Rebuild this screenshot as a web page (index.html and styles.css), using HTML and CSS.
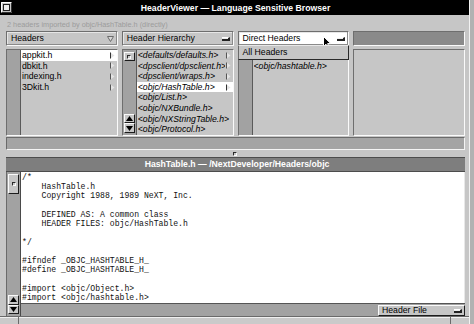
FILE: index.html
```html
<!DOCTYPE html>
<html>
<head>
<meta charset="utf-8">
<link rel="stylesheet" href="styles.css">
</head>
<body>
<div class="window">
  <div class="titlebar">
    <svg class="mini" width="11" height="11" viewBox="0 0 11 11"><rect x="0" y="0" width="11" height="11" fill="#c6c6c6"/><path d="M0.5 10.5V0.5H10.5" stroke="#fff" fill="none"/><path d="M0.5 10.5H10.5V0.5" stroke="#333" fill="none"/><rect x="2.5" y="2.5" width="6" height="6" fill="#eee" stroke="#222"/></svg>
    <span class="title">HeaderViewer — Language Sensitive Browser</span>
  </div>
  <div class="status">2 headers imported by objc/HashTable.h (directly)</div>
  <div class="browser">
    <div class="col">
      <div class="colhead"><span>Headers</span><svg class="pulldown" width="7" height="6" viewBox="0 0 7 6"><path d="M0.5 0.5H6.5L3.5 5.5Z" fill="#d8d8d8" stroke="#6a6a6a"/></svg></div>
      <div class="list">
        <div class="trough"></div>
        <ul class="rows">
          <li class="sel"><span>appkit.h</span><svg class="br" width="5" height="7" viewBox="0 0 5 7"><path d="M0.5 0.5V6.5L4.5 3.5Z" fill="#e4e4e4"/><path d="M0.5 0.5V6.5" stroke="#333"/></svg></li>
          <li><span>dbkit.h</span><svg class="br" width="5" height="7" viewBox="0 0 5 7"><path d="M0.5 0.5V6.5L4.5 3.5Z" fill="#e4e4e4"/><path d="M0.5 0.5V6.5" stroke="#555"/></svg></li>
          <li><span>indexing.h</span><svg class="br" width="5" height="7" viewBox="0 0 5 7"><path d="M0.5 0.5V6.5L4.5 3.5Z" fill="#e4e4e4"/><path d="M0.5 0.5V6.5" stroke="#555"/></svg></li>
          <li><span>3Dkit.h</span><svg class="br" width="5" height="7" viewBox="0 0 5 7"><path d="M0.5 0.5V6.5L4.5 3.5Z" fill="#e4e4e4"/><path d="M0.5 0.5V6.5" stroke="#555"/></svg></li>
        </ul>
      </div>
    </div>
    <div class="col">
      <div class="colhead"><span>Header Hierarchy</span><i class="popicon"></i></div>
      <div class="list">
        <div class="scroller">
          <div class="knob"><i class="dimple"></i></div>
          <div class="arrows">
            <div class="arrow"><svg width="7" height="5" viewBox="0 0 7 5"><path d="M3.5 0L7 5H0Z" fill="#000"/></svg></div>
            <div class="arrow"><svg width="7" height="5" viewBox="0 0 7 5"><path d="M0 0H7L3.5 5Z" fill="#000"/></svg></div>
          </div>
        </div>
        <ul class="rows ital">
          <li><span>&lt;defaults/defaults.h&gt;</span><svg class="br" width="5" height="7" viewBox="0 0 5 7"><path d="M0.5 0.5V6.5L4.5 3.5Z" fill="#e4e4e4"/><path d="M0.5 0.5V6.5" stroke="#555"/></svg></li>
          <li><span>&lt;dpsclient/dpsclient.h&gt;</span><svg class="br" width="5" height="7" viewBox="0 0 5 7"><path d="M0.5 0.5V6.5L4.5 3.5Z" fill="#e4e4e4"/><path d="M0.5 0.5V6.5" stroke="#555"/></svg></li>
          <li><span>&lt;dpsclient/wraps.h&gt;</span><svg class="br" width="5" height="7" viewBox="0 0 5 7"><path d="M0.5 0.5V6.5L4.5 3.5Z" fill="#e4e4e4"/><path d="M0.5 0.5V6.5" stroke="#555"/></svg></li>
          <li class="sel"><span>&lt;objc/HashTable.h&gt;</span><svg class="br" width="5" height="7" viewBox="0 0 5 7"><path d="M0.5 0.5V6.5L4.5 3.5Z" fill="#e4e4e4"/><path d="M0.5 0.5V6.5" stroke="#333"/></svg></li>
          <li><span>&lt;objc/List.h&gt;</span></li>
          <li><span>&lt;objc/NXBundle.h&gt;</span></li>
          <li><span>&lt;objc/NXStringTable.h&gt;</span></li>
          <li><span>&lt;objc/Protocol.h&gt;</span></li>
        </ul>
      </div>
    </div>
    <div class="col">
      <div class="colhead popup"><span>Direct Headers</span><i class="popicon"></i>
        <div class="menu">All Headers</div>
      </div>
      <div class="list">
        <div class="trough"></div>
        <ul class="rows ital">
          <li></li>
          <li><span>&lt;objc/hashtable.h&gt;</span></li>
        </ul>
      </div>
    </div>
    <div class="col">
      <div class="colhead dark"></div>
      <div class="list"></div>
    </div>
  </div>
  <div class="hscroll"></div>
  <div class="divider"><i class="dimple"></i></div>
  <div class="pane">
    <div class="panetitle">HashTable.h — /NextDeveloper/Headers/objc</div>
    <div class="panebody">
      <div class="vscroll">
        <div class="knob tall"><i class="dimple"></i></div>
        <div class="arrows">
          <div class="arrow"><svg width="7" height="5" viewBox="0 0 7 5"><path d="M3.5 0L7 5H0Z" fill="#000"/></svg></div>
          <div class="arrow"><svg width="7" height="5" viewBox="0 0 7 5"><path d="M0 0H7L3.5 5Z" fill="#000"/></svg></div>
        </div>
      </div>
      <div class="textcol">
<pre class="code">/*
    HashTable.h
    Copyright 1988, 1989 NeXT, Inc.

    DEFINED AS: A common class
    HEADER FILES: objc/HashTable.h

*/

#ifndef _OBJC_HASHTABLE_H_
#define _OBJC_HASHTABLE_H_

#import &lt;objc/Object.h&gt;
#import &lt;objc/hashtable.h&gt;</pre>
        <div class="accessory">
          <div class="popbtn"><span>Header File</span><i class="popicon"></i></div>
        </div>
      </div>
    </div>
  </div>
  <div class="resizebar"><span class="seg left"></span><span class="seg mid"></span><span class="seg right"></span></div>
</div>
<svg class="cursor" width="9" height="13" viewBox="0 0 9 13"><path d="M0.5 0.5V10.5L3 8.2L4.8 12.2L6.4 11.5L4.6 7.6H7.8Z" fill="#000" stroke="#fff" stroke-width="1"/></svg>
</body>
</html>
```
FILE: styles.css
```css
* { box-sizing: border-box; margin: 0; padding: 0; }
html, body { width: 474px; height: 324px; overflow: hidden; }
body {
  background: #b2b2b2;
  font-family: "Liberation Sans", Arial, sans-serif;
  font-size: 8.7px;
  color: #000;
  position: relative;
}
.window {
  width: 470px;
  height: 324px;
  display: flex;
  flex-direction: column;
  background: #c6c6c6;
  border-right: 1px solid #f2f2f2;
}
.titlebar {
  height: 15px;
  flex: none;
  background: #000;
  color: #fff;
  display: flex;
  align-items: center;
}
.mini { display: block; margin-left: 1px; flex: none; }
.title {
  flex: 1;
  text-align: center;
  font-weight: bold;
  font-size: 8.7px;
  line-height: 15px;
  padding-top: 1px;
  padding-left: 2px;
  margin-right: 12px;
  white-space: nowrap;
}
.status {
  height: 16px;
  flex: none;
  padding: 3px 0 0 7px;
  line-height: 13px;
  font-size: 7.3px;
  color: #9c9c9c;
  white-space: nowrap;
}
.browser {
  height: 104px;
  flex: none;
  display: grid;
  grid-template-columns: repeat(4, 1fr);
  column-gap: 4px;
  padding: 0 4px 0 6px;
}
.col {
  display: flex;
  flex-direction: column;
  gap: 3px;
  min-width: 0;
}
.colhead {
  position: relative;
  height: 15px;
  flex: none;
  display: flex;
  align-items: center;
  justify-content: space-between;
  padding: 0 2px 0 4px;
  background: #c6c6c6;
  border: 1px solid;
  border-color: #6e6e6e #fafafa #fafafa #6e6e6e;
  box-shadow: inset -1px -1px 0 #8a8a8a, inset 1px 1px 0 #e6e6e6;
  white-space: nowrap;
  line-height: 13px;
}
.colhead.popup { background: #fff; }
.colhead.dark { background: #8a8a8a; box-shadow: none; }
.pulldown { display: block; margin-right: 1px; }
.popicon {
  display: block;
  width: 8px;
  height: 4px;
  background: #efefef;
  border-top: 1px solid #fff;
  border-right: 2px solid #222;
  border-bottom: 2px solid #222;
  margin-right: 1px;
}
.menu {
  position: absolute;
  left: -1px;
  right: -1px;
  top: 13px;
  height: 15px;
  background: #c6c6c6;
  border: 1px solid;
  border-color: #e8e8e8 #2a2a2a #2a2a2a #6a6a6a;
  padding-left: 4px;
  line-height: 13px;
  z-index: 2;
}
.list {
  flex: 1;
  display: flex;
  border: 1px solid;
  border-color: #6e6e6e #fafafa #fafafa #6e6e6e;
  background: #c6c6c6;
  overflow: hidden;
}
.trough {
  width: 14px;
  flex: none;
  background: #a2a2a2;
  border-right: 1px solid #5a5a5a;
}
.scroller {
  width: 14px;
  flex: none;
  background: #a2a2a2;
  border-right: 1px solid #5a5a5a;
  display: flex;
  flex-direction: column;
  justify-content: space-between;
  padding: 2px 1px 2px 1px;
}
.knob {
  height: 9px;
  background: #c6c6c6;
  border: 1px solid;
  border-color: #fafafa #1c1c1c #1c1c1c #fafafa;
  display: flex;
  align-items: center;
  justify-content: center;
}
.knob.tall { height: 20px; }
.dimple {
  display: block;
  width: 4px;
  height: 4px;
  border: 1px solid;
  border-color: #2a2a2a #fafafa #fafafa #2a2a2a;
}
.arrows { display: flex; flex-direction: column; }
.arrow {
  height: 9.5px;
  background: #c6c6c6;
  border: 1px solid;
  border-color: #fafafa #1c1c1c #1c1c1c #fafafa;
  display: flex;
  align-items: center;
  justify-content: center;
}
.arrow svg { display: block; }
.rows {
  list-style: none;
  flex: 1;
  min-width: 0;
}
.rows li {
  height: 10.6px;
  line-height: 10.6px;
  display: flex;
  align-items: center;
  justify-content: space-between;
  padding: 0 2px 0 1px;
  white-space: nowrap;
  overflow: hidden;
}
.rows li span { overflow: hidden; min-width: 0; flex: 1; }
.rows.ital li { font-style: italic; }
.rows li.sel { background: #fff; }
.br { display: block; flex: none; margin-left: 1px; }
.hscroll {
  height: 13px;
  flex: none;
  margin: 2px 4px 0 6px;
  background: #a4a4a4;
  border: 1px solid;
  border-color: #6a6a6a #f4f4f4 #f4f4f4 #6a6a6a;
}
.divider {
  height: 7px;
  flex: none;
  display: flex;
  align-items: center;
  justify-content: center;
}
.pane {
  flex: 1;
  display: flex;
  flex-direction: column;
  margin: 0 4px 0 6px;
  min-height: 0;
}
.panetitle {
  height: 15px;
  flex: none;
  background: #7e7e7e;
  border-top: 1px solid #4c4c4c;
  border-bottom: 1px solid #4c4c4c;
  color: #fff;
  font-weight: bold;
  text-align: center;
  line-height: 13px;
  padding-left: 3px;
  white-space: nowrap;
}
.panebody {
  flex: 1;
  display: flex;
  min-height: 0;
}
.vscroll {
  width: 15px;
  flex: none;
  background: #a2a2a2;
  border-left: 1px solid #6a6a6a;
  border-right: 1px solid #4a4a4a;
  display: flex;
  flex-direction: column;
  justify-content: space-between;
  padding: 2px 1px 2px 1px;
}
.textcol {
  flex: 1;
  display: flex;
  flex-direction: column;
  min-width: 0;
}
.code {
  flex: 1;
  background: #fff;
  font-family: "Liberation Mono", "Courier New", monospace;
  font-size: 8.15px;
  line-height: 9.23px;
  padding: 1px 0 0 1px;
  overflow: hidden;
  color: #111;
  border-right: 1px solid #e8e8e8;
}
.accessory {
  height: 13px;
  flex: none;
  background: #a2a2a2;
  border-top: 1px solid #555;
  display: flex;
  justify-content: flex-end;
  align-items: flex-end;
}
.popbtn {
  width: 87px;
  height: 11px;
  background: #c6c6c6;
  border: 1px solid;
  border-color: #fafafa #1c1c1c #1c1c1c #fafafa;
  display: flex;
  align-items: center;
  justify-content: space-between;
  padding: 0 1px 0 3px;
  line-height: 9px;
}
.resizebar {
  height: 8px;
  flex: none;
  display: flex;
  border-top: 1px solid #6a6a6a;
  margin-top: 0;
  background: #cacaca;
}
.seg { display: block; border-right: 1px solid #6a6a6a; box-shadow: inset 0 1px 0 #f0f0f0; }
.seg.left { width: 19px; }
.seg.mid { flex: 1; }
.seg.right { width: 18px; border-right: none; }
.cursor { position: absolute; left: 323px; top: 36px; display: block; }
```
